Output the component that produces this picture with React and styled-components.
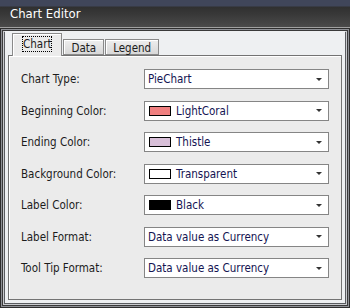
import React from "react";
import styled, { createGlobalStyle } from "styled-components";

const GlobalStyle = createGlobalStyle`
  html, body { margin: 0; padding: 0; background: #2e2e2e; }
  body { font-family: "DejaVu Sans Condensed", "DejaVu Sans", sans-serif; }
`;

const rows = [
  { label: "Chart Type:", value: "PieChart" },
  { label: "Beginning Color:", value: "LightCoral", swatch: "#f08080" },
  { label: "Ending Color:", value: "Thistle", swatch: "#d8bfd8" },
  { label: "Background Color:", value: "Transparent", swatch: "#ffffff" },
  { label: "Label Color:", value: "Black", swatch: "#000000" },
  { label: "Label Format:", value: "Data value as Currency" },
  { label: "Tool Tip Format:", value: "Data value as Currency" },
];

const App = () => {
  return (
    <>
      <GlobalStyle />
      <Window>
        <TitleBar>Chart Editor</TitleBar>
        <Frame>
          <Panel>
            <TabStrip>
              <Tab active>
                <Focus>Chart</Focus>
              </Tab>
              <Tab>Data</Tab>
              <Tab>Legend</Tab>
            </TabStrip>
            <TabPage>
              <Form>
                {rows.map((r) => (
                  <React.Fragment key={r.label}>
                    <Label>{r.label}</Label>
                    <Select>
                      {r.swatch && <Swatch color={r.swatch} />}
                      <Value>{r.value}</Value>
                      <Arrow />
                    </Select>
                  </React.Fragment>
                ))}
              </Form>
            </TabPage>
          </Panel>
        </Frame>
      </Window>
    </>
  );
};

export default App;

const Window = styled.div`
  width: 350px;
  height: 308px;
  display: flex;
  flex-direction: column;
  background: #2e2e2e;
  overflow: hidden;
`;

const TitleBar = styled.div`
  height: 27px;
  flex: none;
  box-sizing: border-box;
  padding: 6px 0 0 10px;
  color: #ffffff;
  font-size: 13px;
  background: linear-gradient(
    #40465a 0,
    #40465a 6px,
    #303030 7px,
    #383838 14px,
    #4a4a4a 27px
  );
`;

const Frame = styled.div`
  flex: 1;
  display: flex;
  padding: 3px 5px 5px 5px;
  background: #eef0f2;
  box-shadow: inset 0 0 0 1px #2e2e2e, inset 0 0 0 2px #8e9096,
    inset 0 0 0 3px #3a3a3a, inset 0 0 0 4px #c9cbcf, inset 0 0 0 5px #5a5c60;
  border-top: 1px solid #a0a0a0;
`;

const Panel = styled.div`
  flex: 1;
  display: flex;
  flex-direction: column;
  padding: 2px 3px 3px 3px;
  background: #eef0f2;
`;

const TabStrip = styled.div`
  display: flex;
  align-items: flex-end;
  height: 22px;
  padding-left: 4px;
  position: relative;
  z-index: 1;
`;

const Tab = styled.div`
  box-sizing: border-box;
  height: ${(p) => (p.active ? "23px" : "16px")};
  margin-bottom: ${(p) => (p.active ? "-1px" : "0")};
  margin-right: 1px;
  padding: ${(p) => (p.active ? "3px 10px 0" : "1px 7px 0")};
  font-size: 11.5px;
  color: #1c1c1c;
  border: 1px solid #8a8a8a;
  border-bottom: ${(p) => (p.active ? "none" : "1px solid #8a8a8a")};
  background: ${(p) =>
    p.active ? "#ebebeb" : "linear-gradient(#eeeeee, #d8d8d8)"};
  box-shadow: inset 1px 1px 0 #ffffff;
`;

const Focus = styled.span`
  outline: 1px dotted #000000;
  outline-offset: 0;
`;

const TabPage = styled.div`
  flex: 1;
  background: #ebebeb;
  border: 1px solid #737373;
  box-shadow: inset 1px 1px 0 #ffffff;
  padding: 13px 12px 0 12px;
`;

const Form = styled.div`
  display: grid;
  grid-template-columns: 123px 1fr;
  row-gap: 11.5px;
  align-items: center;
`;

const Label = styled.div`
  font-size: 11.5px;
  color: #1c1c1c;
`;

const Select = styled.div`
  height: 20px;
  box-sizing: border-box;
  display: flex;
  align-items: center;
  background: #ffffff;
  border: 1px solid #858585;
  padding: 0 0 0 3px;
`;

const Swatch = styled.div`
  width: 20px;
  height: 8px;
  margin: 0 5px 0 1px;
  flex: none;
  background: ${(p) => p.color};
  border: 1px solid #000000;
`;

const Value = styled.div`
  flex: 1;
  font-size: 11.5px;
  color: #141452;
  white-space: nowrap;
`;

const Arrow = styled.div`
  width: 0;
  height: 0;
  margin-right: 6px;
  border-left: 3px solid transparent;
  border-right: 3px solid transparent;
  border-top: 3px solid #333333;
`;
